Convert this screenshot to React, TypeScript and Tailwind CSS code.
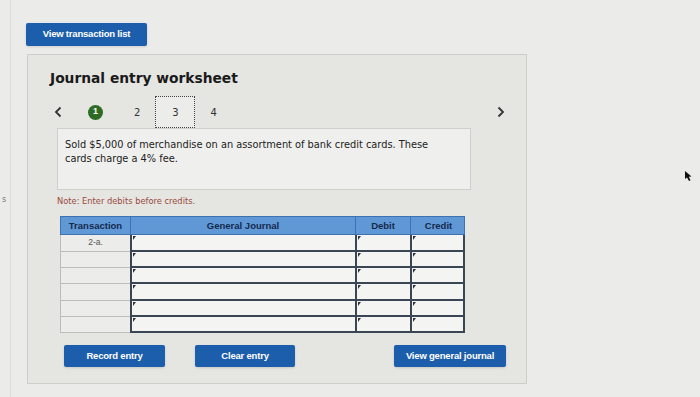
import React from 'react';

const rows = [0, 1, 2, 3, 4, 5];

function Marker() {
  return <span className="absolute left-[1px] top-[1px] w-0 h-0 border-t-[4px] border-t-[#2b3440] border-r-[3px] border-r-transparent" />;
}

function BlueButton({ label, w, className = '' }: { label: string; w: string; className?: string }) {
  return (
    <button
      className={`block ${w} h-[22px] bg-[#1c5eab] rounded-[2px] text-white text-[9.5px] font-bold tracking-[-0.2px] shadow-sm ${className}`}
      style={{ fontFamily: '"Liberation Sans", Arial, sans-serif' }}
    >
      {label}
    </button>
  );
}

export default function App() {
  return (
    <div className="relative w-[700px] h-[397px] overflow-hidden bg-[#ebebe9] pl-[26px] pt-[23px]">
      {/* faint left edge from the photo */}
      <div className="absolute left-[10px] top-0 h-full w-px bg-[#dcdcda]" />
      <span className="absolute left-[2px] top-[194px] text-[8px] text-[#777]" style={{ fontFamily: '"DejaVu Sans", sans-serif' }}>s</span>

      {/* mouse cursor */}
      <svg className="absolute left-[684px] top-[170px]" width="9" height="12" viewBox="0 0 9 12">
        <path d="M1 1 L1 9 L3 7.5 L5 11 L6.5 10.3 L4.8 6.8 L7.5 6.6 Z" fill="#111" />
      </svg>

      <BlueButton label="View transaction list" w="w-[121px]" className="h-[23px]" />

      <div className="mt-[8px] ml-[1px] w-[500px] h-[330px] border border-[#cdcdca] bg-[#e5e5e2] pl-[22px] pt-[14px]">
        <h1 className="text-[13.8px] font-bold text-[#1a1a1a] leading-[18px]" style={{ fontFamily: '"DejaVu Sans", Verdana, sans-serif' }}>
          Journal entry worksheet
        </h1>

        {/* step nav */}
        <div className="flex items-center h-[32px] mt-[9px] text-[10px] text-[#333]" style={{ fontFamily: '"DejaVu Sans", Verdana, sans-serif' }}>
          <svg className="ml-[4px]" width="8" height="12" viewBox="0 0 8 12">
            <path d="M6.5 1.5 L2 6 L6.5 10.5" stroke="#333" strokeWidth="1.8" fill="none" />
          </svg>
          <span className="ml-[26px] w-[15px] h-[15px] rounded-full bg-[#2e6b24] text-white text-[9px] font-bold flex items-center justify-center" style={{ fontFamily: '"Liberation Sans", Arial, sans-serif' }}>1</span>
          <span className="ml-[31px]">2</span>
          <span className="ml-[15px] w-[40px] h-[32px] border border-dotted border-[#444] bg-[#ececea] flex items-center justify-center">3</span>
          <span className="ml-[15px]">4</span>
          <svg className="ml-auto mr-[21px]" width="8" height="12" viewBox="0 0 8 12">
            <path d="M1.5 1.5 L6 6 L1.5 10.5" stroke="#333" strokeWidth="1.8" fill="none" />
          </svg>
        </div>

        {/* description */}
        <div className="ml-[7px] w-[414px] h-[62px] border border-[#cfcfcc] bg-[#efefed] px-[7px] pt-[9px] text-[9.8px] leading-[14px] text-[#222]" style={{ fontFamily: '"DejaVu Sans", Verdana, sans-serif' }}>
          Sold $5,000 of merchandise on an assortment of bank credit cards. These<br />cards charge a 4% fee.
        </div>

        <p className="ml-[7px] mt-[5px] text-[8.3px] text-[#9a4b3c]" style={{ fontFamily: '"DejaVu Sans", Verdana, sans-serif' }}>
          Note: Enter debits before credits.
        </p>

        {/* table */}
        <div className="ml-[10px] mt-[9px] w-[405px]" style={{ fontFamily: '"Liberation Sans", Arial, sans-serif' }}>
          <div className="grid grid-cols-[70px_225px_55px_55px] h-[19px] bg-[#6098d6] border border-[#3e71b2] text-[9.5px] font-bold text-[#142a4d]">
            <div className="flex items-center justify-center border-r border-[#3e71b2]">Transaction</div>
            <div className="flex items-center justify-center border-r border-[#3e71b2]">General Journal</div>
            <div className="flex items-center justify-center border-r border-[#3e71b2]">Debit</div>
            <div className="flex items-center justify-center">Credit</div>
          </div>
          {rows.map((r) => (
            <div key={r} className="grid grid-cols-[70px_225px_55px_55px] h-[16.3px]">
              <div className="bg-[#ececeb] border-l border-b border-[#bdbdbb] text-[8.5px] text-[#555] flex justify-center pt-[1px]">
                {r === 0 ? '2-a.' : ''}
              </div>
              <div className="relative bg-[#f4f4f2] border-l-2 border-b-2 border-[#3b4654]"><Marker /></div>
              <div className="relative bg-[#f4f4f2] border-l-2 border-b-2 border-[#3b4654]"><Marker /></div>
              <div className="relative bg-[#f4f4f2] border-l-2 border-r-2 border-b-2 border-[#3b4654]"><Marker /></div>
            </div>
          ))}
        </div>

        {/* actions */}
        <div className="flex items-center mt-[12px] ml-[14px] w-[442px]">
          <BlueButton label="Record entry" w="w-[101px]" />
          <BlueButton label="Clear entry" w="w-[100px]" className="ml-[30px]" />
          <BlueButton label="View general journal" w="w-[112px]" className="ml-auto" />
        </div>
      </div>
    </div>
  );
}
